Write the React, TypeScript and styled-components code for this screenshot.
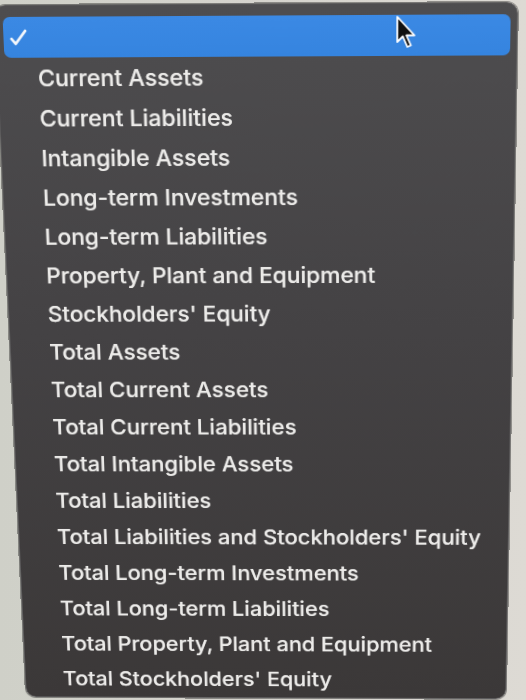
import React from "react";
import styled, { createGlobalStyle } from "styled-components";

const FLAT_W = 520;
const FLAT_H = 752;

type P = [number, number];
const CORNERS: [P, P, P, P] = [
  [-6, 5],
  [518, 2],
  [506, 699],
  [26, 697],
];

function homography(): string {
  const [[x0, y0], [x1, y1], [x2, y2], [x3, y3]] = CORNERS;
  const dx1 = x1 - x2, dx2 = x3 - x2, dx3 = x0 - x1 + x2 - x3;
  const dy1 = y1 - y2, dy2 = y3 - y2, dy3 = y0 - y1 + y2 - y3;
  const den = dx1 * dy2 - dx2 * dy1;
  const g = (dx3 * dy2 - dx2 * dy3) / den;
  const h = (dx1 * dy3 - dx3 * dy1) / den;
  const a = x1 - x0 + g * x1;
  const b = x3 - x0 + h * x3;
  const c = x0;
  const d = y1 - y0 + g * y1;
  const e = y3 - y0 + h * y3;
  const f = y0;
  const A = a / FLAT_W, B = b / FLAT_H, D = d / FLAT_W, E = e / FLAT_H;
  const G = g / FLAT_W, H = h / FLAT_H;
  const v = [A, D, 0, G, B, E, 0, H, 0, 0, 1, 0, c, f, 0, 1];
  return `matrix3d(${v.map((n) => n.toFixed(8)).join(",")})`;
}

const TRANSFORM = homography();

const GlobalStyle = createGlobalStyle`
  html, body {
    margin: 0;
    padding: 0;
    overflow: hidden;
    height: 700px;
  }
  body {
    background: linear-gradient(90deg, #cfd0c8 0%, #d6d4ce 50%, #dddad4 100%);
    font-family: Inter, "Noto Sans", "Liberation Sans", sans-serif;
  }
`;

const Stage = styled.div`
  width: 526px;
  height: 700px;
  overflow: hidden;
`;

const Menu = styled.div`
  width: ${FLAT_W}px;
  height: ${FLAT_H}px;
  box-sizing: border-box;
  padding: 11px 0 3px;
  display: flex;
  flex-direction: column;
  background: linear-gradient(180deg, #4e4d4f 0%, #444244 45%, #3b3838 100%);
  border: 1px solid #5c5b5c;
  border-radius: 11px;
  transform-origin: 0 0;
  transform: ${TRANSFORM};
  position: relative;
  box-shadow: 0 0 0 1px rgba(0, 0, 0, 0.35);
`;

const Row = styled.div<{ $selected?: boolean }>`
  height: 41px;
  flex: 0 0 41px;
  margin: 0 6px 0 7px;
  padding-left: 33px;
  display: flex;
  align-items: center;
  position: relative;
  border-radius: 7px;
  background: ${(p) => (p.$selected ? "linear-gradient(180deg, #3b89e4 0%, #3584df 100%)" : "transparent")};
  color: #ecebe9;
  font-size: 23.3px;
  font-weight: 500;
  white-space: nowrap;
  text-shadow: 0 0 0.7px rgba(255, 255, 255, 0.6);
`;

const Check = styled.svg`
  position: absolute;
  left: 6px;
  top: 12px;
  width: 18px;
  height: 18px;
`;

const Cursor = styled.svg`
  position: absolute;
  left: 398px;
  top: 11px;
  width: 22px;
  height: 36px;
  z-index: 2;
`;

const items = [
  "Current Assets",
  "Current Liabilities",
  "Intangible Assets",
  "Long-term Investments",
  "Long-term Liabilities",
  "Property, Plant and Equipment",
  "Stockholders' Equity",
  "Total Assets",
  "Total Current Assets",
  "Total Current Liabilities",
  "Total Intangible Assets",
  "Total Liabilities",
  "Total Liabilities and Stockholders' Equity",
  "Total Long-term Investments",
  "Total Long-term Liabilities",
  "Total Property, Plant and Equipment",
  "Total Stockholders' Equity",
];

export default function App() {
  return (
    <Stage>
      <GlobalStyle />
      <Menu>
        <Row $selected>
          <Check viewBox="0 0 18 18">
            <polyline
              points="2,10 6,15 16,2"
              fill="none"
              stroke="#f4f7fb"
              strokeWidth="2.8"
              strokeLinecap="round"
              strokeLinejoin="round"
            />
          </Check>
        </Row>
        {items.map((t) => (
          <Row key={t}>{t}</Row>
        ))}
        <Cursor viewBox="0 0 22 36">
          <path
            d="M2 2 L2 27 L7.5 21.5 L12 32 L15.5 30.5 L11 20.5 L19 20.5 Z"
            fill="#111"
            stroke="#fff"
            strokeWidth="1.8"
            strokeLinejoin="round"
          />
        </Cursor>
      </Menu>
    </Stage>
  );
}
